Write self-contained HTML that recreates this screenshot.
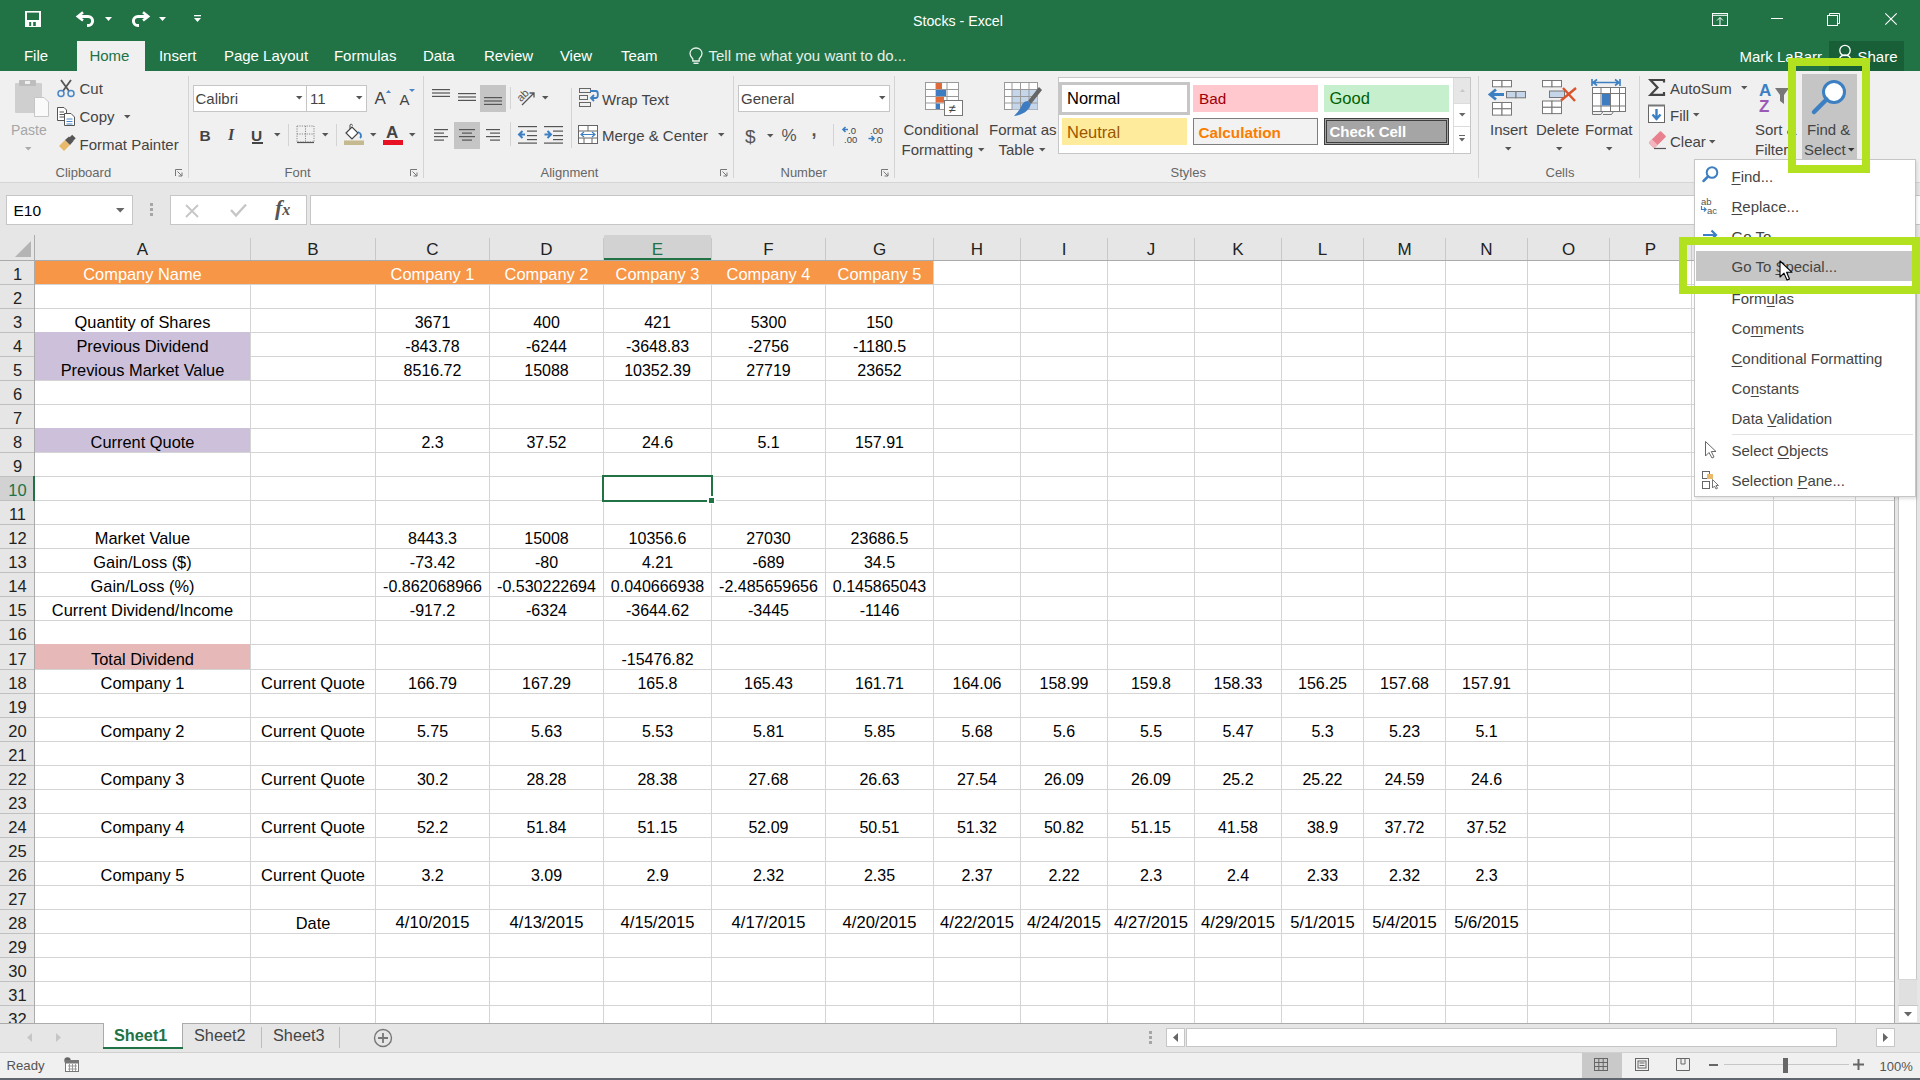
<!DOCTYPE html><html><head><meta charset="utf-8"><title>Stocks - Excel</title><style>
*{margin:0;padding:0;box-sizing:border-box}
html,body{width:1920px;height:1080px;overflow:hidden;background:#fff;font-family:"Liberation Sans",sans-serif}
.a{position:absolute}
.t{position:absolute;white-space:nowrap;line-height:1}
svg{position:absolute;overflow:visible}
</style></head><body>
<div class="a" style="left:0px;top:0px;width:1920px;height:71px;background:#217346;"></div>
<svg style="left:25px;top:11px" width="16" height="16" viewBox="0 0 16 16"><rect x="0" y="0" width="16" height="16" fill="#fff"/><rect x="2" y="1.6" width="12" height="7.4" fill="#217346"/><rect x="4.2" y="11" width="2" height="4" fill="#217346"/><rect x="8.2" y="11" width="2.6" height="4" fill="#217346"/></svg>
<svg style="left:76px;top:11px" width="22" height="18" viewBox="0 0 22 18"><path d="M7 1.2 L1.8 5.4 L7 9.6" stroke="#fff" stroke-width="2.6" fill="none"/><path d="M2.5 5.4 H12 A4.6 4.6 0 0 1 12 14.6 H11" stroke="#fff" stroke-width="3" fill="none"/></svg>
<svg style="left:105px;top:17px" width="8" height="4" viewBox="0 0 8 4"><path d="M0 0 H7 L3.5 4 Z" fill="#fff"/></svg>
<svg style="left:128px;top:11px" width="22" height="18" viewBox="0 0 22 18"><g transform="translate(22,0) scale(-1,1)"><path d="M7 1.2 L1.8 5.4 L7 9.6" stroke="#fff" stroke-width="2.6" fill="none"/><path d="M2.5 5.4 H12 A4.6 4.6 0 0 1 12 14.6 H11" stroke="#fff" stroke-width="3" fill="none"/></g></svg>
<svg style="left:159px;top:17px" width="8" height="4" viewBox="0 0 8 4"><path d="M0 0 H7 L3.5 4 Z" fill="#fff"/></svg>
<svg style="left:194px;top:15px" width="7" height="8" viewBox="0 0 7 8"><rect x="0" y="0" width="7" height="1.3" fill="#fff"/><path d="M0 3 H7 L3.5 7 Z" fill="#fff"/></svg>
<span class="t" style="left:913.0px;top:14.2px;font-size:14.2px;color:#fff;font-weight:normal;">Stocks - Excel</span>
<svg style="left:1712px;top:13px" width="16" height="13" viewBox="0 0 16 13"><rect x="0.5" y="0.5" width="15" height="12" fill="none" stroke="#fff"/><path d="M8 4.5 V12 M5 7.5 L8 4.5 L11 7.5" stroke="#fff" fill="none"/><path d="M0.5 2.3 H15.5" stroke="#fff"/></svg>
<div class="a" style="left:1771px;top:18px;width:12px;height:1px;background:#fff;"></div>
<svg style="left:1827px;top:13px" width="13" height="13" viewBox="0 0 13 13"><rect x="0.5" y="2.5" width="10" height="10" fill="none" stroke="#fff"/><path d="M2.5 2.5 V0.5 H12.5 V10.5 H10.5" fill="none" stroke="#fff"/></svg>
<svg style="left:1885px;top:13px" width="12" height="12" viewBox="0 0 12 12"><path d="M0.3 0.3 L11.7 11.7 M11.7 0.3 L0.3 11.7" stroke="#fff" stroke-width="1.1"/></svg>
<div class="a" style="left:77px;top:41px;width:68px;height:30px;background:#f0f0f0;"></div>
<span class="t" style="left:23.9px;top:48.0px;font-size:15px;color:#fff;font-weight:normal;">File</span>
<span class="t" style="left:89.4px;top:48.0px;font-size:15px;color:#217346;font-weight:normal;">Home</span>
<span class="t" style="left:158.9px;top:48.0px;font-size:15px;color:#fff;font-weight:normal;">Insert</span>
<span class="t" style="left:223.9px;top:48.0px;font-size:15px;color:#fff;font-weight:normal;">Page Layout</span>
<span class="t" style="left:333.9px;top:48.0px;font-size:15px;color:#fff;font-weight:normal;">Formulas</span>
<span class="t" style="left:422.9px;top:48.0px;font-size:15px;color:#fff;font-weight:normal;">Data</span>
<span class="t" style="left:483.9px;top:48.0px;font-size:15px;color:#fff;font-weight:normal;">Review</span>
<span class="t" style="left:559.9px;top:48.0px;font-size:15px;color:#fff;font-weight:normal;">View</span>
<span class="t" style="left:620.9px;top:48.0px;font-size:15px;color:#fff;font-weight:normal;">Team</span>
<svg style="left:689px;top:47px" width="14" height="18" viewBox="0 0 14 18"><path d="M7 1 C3.5 1 1 3.5 1 6.5 C1 9 2.6 10.3 3.8 11.8 V14 H10.2 V11.8 C11.4 10.3 13 9 13 6.5 C13 3.5 10.5 1 7 1 Z" fill="none" stroke="#e8f0ea" stroke-width="1.3"/><path d="M4.5 16.3 H9.5" stroke="#e8f0ea" stroke-width="1.4"/></svg>
<span class="t" style="left:708.5px;top:48.0px;font-size:15px;color:#e4efe7;font-weight:normal;">Tell me what you want to do...</span>
<span class="t" style="left:1739.5px;top:48.8px;font-size:15px;color:#fff;font-weight:normal;">Mark LaBarr</span>
<div class="a" style="left:1829px;top:41px;width:75px;height:30px;background:#185f37;"></div>
<svg style="left:1838px;top:45px" width="14" height="18" viewBox="0 0 14 18"><circle cx="7" cy="5.5" r="5.2" fill="none" stroke="#fff" stroke-width="1.3"/><path d="M1 17 C1 12 3.5 10 7 10 C10.5 10 13 12 13 17" fill="none" stroke="#fff" stroke-width="1.3"/></svg>
<span class="t" style="left:1857.5px;top:48.8px;font-size:15px;color:#fff;font-weight:normal;">Share</span>
<div class="a" style="left:0px;top:71px;width:1920px;height:111px;background:#f0f0f0;"></div>
<div class="a" style="left:0px;top:182px;width:1920px;height:1px;background:#d5d5d5;"></div>
<div class="a" style="left:188px;top:76px;width:1px;height:102px;background:#d4d4d4;"></div>
<div class="a" style="left:423px;top:76px;width:1px;height:102px;background:#d4d4d4;"></div>
<div class="a" style="left:733px;top:76px;width:1px;height:102px;background:#d4d4d4;"></div>
<div class="a" style="left:894px;top:76px;width:1px;height:102px;background:#d4d4d4;"></div>
<div class="a" style="left:1478px;top:76px;width:1px;height:102px;background:#d4d4d4;"></div>
<div class="a" style="left:1639px;top:76px;width:1px;height:102px;background:#d4d4d4;"></div>
<svg style="left:14px;top:79px" width="36" height="39" viewBox="0 0 36 39"><rect x="1" y="4" width="27" height="30" rx="1" fill="#cfcfcf"/><rect x="5" y="1" width="17" height="6" rx="1" fill="#bdbdbd"/><rect x="11" y="2" width="5" height="3" fill="#f0f0f0"/><path d="M20.5 18.5 H30 L34.5 23 V37.5 H20.5 Z" fill="#fafafa" stroke="#c6c6c6"/></svg>
<span class="t" style="left:11.0px;top:122.6px;font-size:14px;color:#a6a6a6;font-weight:normal;">Paste</span>
<svg style="left:25px;top:147px" width="7" height="4" viewBox="0 0 7 4"><path d="M0 0 H6.5 L3.25 3.5 Z" fill="#aaa"/></svg>
<svg style="left:57px;top:79px" width="18" height="18" viewBox="0 0 18 18"><path d="M4 1 L12 12 M14 1 L6 12" stroke="#555" stroke-width="1.8"/><circle cx="4" cy="14.5" r="3" fill="none" stroke="#4a86c5" stroke-width="1.5"/><circle cx="14" cy="14.5" r="3" fill="none" stroke="#4a86c5" stroke-width="1.5"/></svg>
<span class="t" style="left:79.5px;top:81.0px;font-size:15px;color:#444;font-weight:normal;">Cut</span>
<svg style="left:57px;top:107px" width="19" height="19" viewBox="0 0 19 19"><path d="M0.5 0.5 H7 L9.5 3 V13.5 H0.5 Z" fill="#fff" stroke="#555"/><path d="M2.5 5 H7 M2.5 7.5 H7 M2.5 10 H7" stroke="#555"/><path d="M7.5 6.5 H14 L17.5 10 V18.5 H7.5 Z" fill="#fff" stroke="#555"/><path d="M9.5 12 H15.5 M9.5 14.5 H15.5 M9.5 17 H15.5" stroke="#4a86c5"/></svg>
<span class="t" style="left:79.5px;top:109.0px;font-size:15px;color:#444;font-weight:normal;">Copy</span>
<svg style="left:124px;top:114.5px" width="7" height="4" viewBox="0 0 7 4"><path d="M0 0 H6.5 L3.25 3.5 Z" fill="#555"/></svg>
<svg style="left:58px;top:136px" width="18" height="16" viewBox="0 0 18 16"><path d="M1 10 L7 4 L12 9 L6 15 Z" fill="#e8b96a"/><path d="M7 4 L11 0.5 L15.5 5 L12 9 Z" fill="#555"/><rect x="12" y="0" width="5" height="4" transform="rotate(45 14.5 2)" fill="#555"/></svg>
<span class="t" style="left:79.5px;top:136.8px;font-size:15px;color:#444;font-weight:normal;">Format Painter</span>
<span class="t" style="left:55.5px;top:165.9px;font-size:13px;color:#666;font-weight:normal;">Clipboard</span>
<svg style="left:175px;top:169px" width="8" height="8" viewBox="0 0 8 8"><path d="M0.5 7 V0.5 H7" fill="none" stroke="#777"/><path d="M2.5 2.5 L7 7 M3.5 7 H7 V3.5" fill="none" stroke="#777"/></svg>
<div class="a" style="left:193px;top:85px;width:114px;height:27px;background:#fff;border:1px solid #c6c6c6"></div>
<div class="a" style="left:306px;top:85px;width:61px;height:27px;background:#fff;border:1px solid #c6c6c6"></div>
<span class="t" style="left:195.5px;top:91.2px;font-size:15px;color:#444;font-weight:normal;">Calibri</span>
<svg style="left:296px;top:95.5px" width="7" height="4" viewBox="0 0 7 4"><path d="M0 0 H6.5 L3.25 3.5 Z" fill="#555"/></svg>
<span class="t" style="left:310.0px;top:91.2px;font-size:15px;color:#444;font-weight:normal;">11</span>
<svg style="left:356px;top:95.5px" width="7" height="4" viewBox="0 0 7 4"><path d="M0 0 H6.5 L3.25 3.5 Z" fill="#555"/></svg>
<span class="t" style="left:374.5px;top:90.0px;font-size:17px;color:#444;font-weight:normal;">A</span>
<svg style="left:386px;top:90px" width="5" height="3" viewBox="0 0 5 3"><path d="M0 3 L2.5 0 L5 3 Z" fill="#4a86c5"/></svg>
<span class="t" style="left:399.5px;top:91.8px;font-size:15px;color:#444;font-weight:normal;">A</span>
<svg style="left:409px;top:89px" width="6" height="3" viewBox="0 0 6 3"><path d="M0 0 H6 L3 3 Z" fill="#4a86c5"/></svg>
<span class="t" style="left:199.5px;top:127.6px;font-size:15.5px;color:#444;font-weight:bold;">B</span>
<span class="t" style="left:228.0px;top:127.2px;font-size:16px;color:#444;font-weight:bold;font-family:'Liberation Serif',serif"><i>I</i></span>
<span class="t" style="left:251.0px;top:127.6px;font-size:15.5px;color:#444;font-weight:bold;">U</span>
<div class="a" style="left:252px;top:142px;width:11px;height:1.5px;background:#444;"></div>
<svg style="left:273.5px;top:133px" width="7" height="4" viewBox="0 0 7 4"><path d="M0 0 H6.5 L3.25 3.5 Z" fill="#555"/></svg>
<div class="a" style="left:288px;top:124px;width:1px;height:22px;background:#d4d4d4;"></div>
<svg style="left:296px;top:125px" width="19" height="19" viewBox="0 0 19 19"><path d="M1 1 H18 V17 H1 Z M9.5 1 V17 M1 9 H18" fill="none" stroke="#888" stroke-dasharray="1.2 1.2"/><path d="M1 17.5 H18" stroke="#555" stroke-width="1.2"/></svg>
<svg style="left:321.5px;top:133px" width="7" height="4" viewBox="0 0 7 4"><path d="M0 0 H6.5 L3.25 3.5 Z" fill="#555"/></svg>
<div class="a" style="left:336px;top:124px;width:1px;height:22px;background:#d4d4d4;"></div>
<svg style="left:343px;top:124px" width="21" height="22" viewBox="0 0 21 22"><path d="M3 9 L9 3 L15 9 L9 15 Z" fill="#fff" stroke="#444" stroke-width="1.2"/><path d="M7 5 V1 C7 0 9.5 0 9.5 1.5" fill="none" stroke="#444"/><path d="M15 8 C18 9 19 12 17 14" fill="none" stroke="#3c7fc2" stroke-width="1.8"/><rect x="1" y="16.5" width="20" height="4.5" fill="#c5b98f"/></svg>
<svg style="left:370px;top:133px" width="7" height="4" viewBox="0 0 7 4"><path d="M0 0 H6.5 L3.25 3.5 Z" fill="#555"/></svg>
<span class="t" style="left:386.0px;top:124.0px;font-size:17px;color:#444;font-weight:bold;">A</span>
<div class="a" style="left:383px;top:140px;width:20px;height:5px;background:#e81123;"></div>
<svg style="left:408.5px;top:133px" width="7" height="4" viewBox="0 0 7 4"><path d="M0 0 H6.5 L3.25 3.5 Z" fill="#555"/></svg>
<span class="t" style="left:284.5px;top:165.9px;font-size:13px;color:#666;font-weight:normal;">Font</span>
<svg style="left:410px;top:169px" width="8" height="8" viewBox="0 0 8 8"><path d="M0.5 7 V0.5 H7" fill="none" stroke="#777"/><path d="M2.5 2.5 L7 7 M3.5 7 H7 V3.5" fill="none" stroke="#777"/></svg>
<svg style="left:432px;top:88.5px" width="20" height="20" viewBox="0 0 20 20"><rect x="0" y="0.0" width="18" height="1.2" fill="#555"/><rect x="0" y="3.4" width="18" height="1.2" fill="#555"/><rect x="0" y="6.8" width="18" height="1.2" fill="#555"/></svg>
<svg style="left:458px;top:92.5px" width="20" height="20" viewBox="0 0 20 20"><rect x="0" y="0.0" width="18" height="1.2" fill="#555"/><rect x="0" y="3.4" width="18" height="1.2" fill="#555"/><rect x="0" y="6.8" width="18" height="1.2" fill="#555"/></svg>
<div class="a" style="left:480px;top:85px;width:26px;height:27px;background:#c5c5c5;"></div>
<svg style="left:484px;top:97px" width="20" height="20" viewBox="0 0 20 20"><rect x="0" y="0.0" width="18" height="1.2" fill="#555"/><rect x="0" y="3.4" width="18" height="1.2" fill="#555"/><rect x="0" y="6.8" width="18" height="1.2" fill="#555"/></svg>
<div class="a" style="left:510px;top:87px;width:1px;height:22px;background:#d4d4d4;"></div>
<svg style="left:517px;top:88px" width="22" height="19" viewBox="0 0 22 19"><text x="0" y="11" font-size="11" fill="#555" transform="rotate(-45 6 8)" font-family="Liberation Sans">ab</text><path d="M5 17 L17 5 M12.5 5 H17 V9.5" fill="none" stroke="#555" stroke-width="1.3"/></svg>
<svg style="left:542px;top:96px" width="7" height="4" viewBox="0 0 7 4"><path d="M0 0 H6.5 L3.25 3.5 Z" fill="#555"/></svg>
<div class="a" style="left:571px;top:88px;width:1px;height:60px;background:#d4d4d4;"></div>
<svg style="left:579px;top:88px" width="21" height="20" viewBox="0 0 21 20"><rect x="0.5" y="0.5" width="11" height="4" fill="none" stroke="#666"/><rect x="0.5" y="7.5" width="8" height="4" fill="none" stroke="#666"/><rect x="0.5" y="14.5" width="11" height="4" fill="none" stroke="#666"/><path d="M11 3 H17 C19.5 3 19.5 10 17 10 H13" fill="none" stroke="#3c7fc2" stroke-width="1.8"/><path d="M15 7 L12 10 L15 13" fill="none" stroke="#3c7fc2" stroke-width="1.8"/></svg>
<span class="t" style="left:602.0px;top:91.8px;font-size:15px;color:#444;font-weight:normal;">Wrap Text</span>
<svg style="left:434px;top:129px" width="20" height="20" viewBox="0 0 20 20"><rect x="0" y="0.0" width="14" height="1.2" fill="#555"/><rect x="0" y="3.5" width="10" height="1.2" fill="#555"/><rect x="0" y="7.0" width="14" height="1.2" fill="#555"/><rect x="0" y="10.5" width="10" height="1.2" fill="#555"/></svg>
<div class="a" style="left:454px;top:122px;width:26px;height:27px;background:#c5c5c5;"></div>
<svg style="left:459px;top:129px" width="20" height="20" viewBox="0 0 20 20"><rect x="0" y="0.0" width="16" height="1.2" fill="#555"/><rect x="3" y="3.5" width="10" height="1.2" fill="#555"/><rect x="0" y="7.0" width="16" height="1.2" fill="#555"/><rect x="3" y="10.5" width="10" height="1.2" fill="#555"/></svg>
<svg style="left:486px;top:129px" width="20" height="20" viewBox="0 0 20 20"><rect x="0" y="0.0" width="14" height="1.2" fill="#555"/><rect x="4" y="3.5" width="10" height="1.2" fill="#555"/><rect x="0" y="7.0" width="14" height="1.2" fill="#555"/><rect x="4" y="10.5" width="10" height="1.2" fill="#555"/></svg>
<div class="a" style="left:510px;top:122px;width:1px;height:24px;background:#d4d4d4;"></div>
<svg style="left:518px;top:126px" width="20" height="18" viewBox="0 0 20 18"><rect x="0" y="0" width="19" height="1.2" fill="#555"/><rect x="9" y="4.5" width="10" height="1.2" fill="#555"/><rect x="9" y="9" width="10" height="1.2" fill="#555"/><rect x="9" y="13" width="10" height="1.2" fill="#555"/><rect x="0" y="16.5" width="19" height="1.2" fill="#555"/><path d="M7 8.5 H1.5 M4.5 5 L1 8.5 L4.5 12" fill="none" stroke="#3c7fc2" stroke-width="2"/></svg>
<svg style="left:544px;top:126px" width="20" height="18" viewBox="0 0 20 18"><rect x="0" y="0" width="19" height="1.2" fill="#555"/><rect x="9" y="4.5" width="10" height="1.2" fill="#555"/><rect x="9" y="9" width="10" height="1.2" fill="#555"/><rect x="9" y="13" width="10" height="1.2" fill="#555"/><rect x="0" y="16.5" width="19" height="1.2" fill="#555"/><path d="M0.5 8.5 H6.5 M3.5 5 L7 8.5 L3.5 12" fill="none" stroke="#3c7fc2" stroke-width="2"/></svg>
<svg style="left:578px;top:125px" width="21" height="19" viewBox="0 0 21 19"><rect x="0.5" y="0.5" width="19" height="18" fill="#fff" stroke="#666"/><path d="M0.5 6 H19.5 M0.5 13 H19.5 M10 0.5 V6 M6 13 V18.5 M14 13 V18.5" stroke="#666"/><path d="M3 9.5 H17 M6 7 L3 9.5 L6 12 M14 7 L17 9.5 L14 12" fill="none" stroke="#3c7fc2" stroke-width="1.2"/></svg>
<span class="t" style="left:602.0px;top:127.8px;font-size:15px;color:#444;font-weight:normal;">Merge &amp; Center</span>
<svg style="left:718px;top:133px" width="7" height="4" viewBox="0 0 7 4"><path d="M0 0 H6.5 L3.25 3.5 Z" fill="#555"/></svg>
<span class="t" style="left:540.5px;top:165.9px;font-size:13px;color:#666;font-weight:normal;">Alignment</span>
<svg style="left:720px;top:169px" width="8" height="8" viewBox="0 0 8 8"><path d="M0.5 7 V0.5 H7" fill="none" stroke="#777"/><path d="M2.5 2.5 L7 7 M3.5 7 H7 V3.5" fill="none" stroke="#777"/></svg>
<div class="a" style="left:738px;top:85px;width:152px;height:27px;background:#fff;border:1px solid #c6c6c6"></div>
<span class="t" style="left:741.0px;top:91.2px;font-size:15px;color:#444;font-weight:normal;">General</span>
<svg style="left:878.5px;top:96px" width="7" height="4" viewBox="0 0 7 4"><path d="M0 0 H6.5 L3.25 3.5 Z" fill="#555"/></svg>
<span class="t" style="left:745.0px;top:126.8px;font-size:19px;color:#555;font-weight:normal;">$</span>
<svg style="left:767px;top:133.5px" width="7" height="4" viewBox="0 0 7 4"><path d="M0 0 H6.5 L3.25 3.5 Z" fill="#555"/></svg>
<span class="t" style="left:781.5px;top:127.0px;font-size:17px;color:#555;font-weight:normal;">%</span>
<span class="t" style="left:811.5px;top:120.7px;font-size:18px;color:#555;font-weight:bold;">,</span>
<div class="a" style="left:833px;top:124px;width:1px;height:22px;background:#d4d4d4;"></div>
<svg style="left:842px;top:126px" width="18" height="18" viewBox="0 0 18 18"><text x="6" y="8" font-size="9.5" fill="#444" font-family="Liberation Sans">.0</text><text x="2" y="17" font-size="9.5" fill="#444" font-family="Liberation Sans">.00</text><path d="M6 3.5 H1 M3.5 1 L1 3.5 L3.5 6" fill="none" stroke="#3c7fc2" stroke-width="1.6"/></svg>
<svg style="left:868px;top:126px" width="18" height="18" viewBox="0 0 18 18"><text x="2" y="8" font-size="9.5" fill="#444" font-family="Liberation Sans">.00</text><text x="6" y="17" font-size="9.5" fill="#444" font-family="Liberation Sans">.0</text><path d="M0.5 12.5 H6 M3.5 10 L6 12.5 L3.5 15" fill="none" stroke="#3c7fc2" stroke-width="1.6"/></svg>
<span class="t" style="left:780.5px;top:165.9px;font-size:13px;color:#666;font-weight:normal;">Number</span>
<svg style="left:881px;top:169px" width="8" height="8" viewBox="0 0 8 8"><path d="M0.5 7 V0.5 H7" fill="none" stroke="#777"/><path d="M2.5 2.5 L7 7 M3.5 7 H7 V3.5" fill="none" stroke="#777"/></svg>
<svg style="left:925px;top:82px" width="38" height="35" viewBox="0 0 38 35"><g fill="#fff" stroke="#999"><rect x="0.5" y="0.5" width="33" height="27"/></g><path d="M0.5 7.5 H33.5 M0.5 14.5 H33.5 M0.5 21 H33.5 M11 0.5 V27.5 M22 0.5 V27.5" stroke="#999"/><rect x="11" y="1" width="6" height="6" fill="#e06a3a"/><rect x="11" y="8" width="10" height="6" fill="#3e7cc2"/><rect x="11" y="15" width="8" height="5.5" fill="#e06a3a"/><rect x="11" y="21.5" width="4" height="5.5" fill="#3e7cc2"/><rect x="19.5" y="18.5" width="18" height="15" fill="#fff" stroke="#777"/><text x="23.5" y="31" font-size="13" fill="#444" font-family="Liberation Sans">&#8800;</text></svg>
<span class="t" style="left:903.5px;top:122.2px;font-size:15px;color:#444;font-weight:normal;">Conditional</span>
<span class="t" style="left:901.5px;top:142.2px;font-size:15px;color:#444;font-weight:normal;">Formatting</span>
<svg style="left:977.5px;top:147.5px" width="7" height="4" viewBox="0 0 7 4"><path d="M0 0 H6.5 L3.25 3.5 Z" fill="#555"/></svg>
<svg style="left:1004px;top:82px" width="40" height="35" viewBox="0 0 40 35"><rect x="0.5" y="0.5" width="33" height="27" fill="#fff" stroke="#999"/><rect x="8" y="7.5" width="25.5" height="20" fill="#c5d6ea"/><path d="M0.5 7.5 H33.5 M0.5 14.5 H33.5 M0.5 21 H33.5 M8 0.5 V27.5 M16.5 0.5 V27.5 M25 0.5 V27.5" stroke="#999"/><path d="M38 8 L27 22 L24 19 L35 5 Z" fill="#666"/><path d="M24 19 C20 19 18 22 17 25 C15 29 11 33 10 34 C16 33 24 31 27 22 Z" fill="#3e7cc2"/></svg>
<span class="t" style="left:989.0px;top:122.2px;font-size:15px;color:#444;font-weight:normal;">Format as</span>
<span class="t" style="left:998.5px;top:142.2px;font-size:15px;color:#444;font-weight:normal;">Table</span>
<svg style="left:1038.5px;top:147.5px" width="7" height="4" viewBox="0 0 7 4"><path d="M0 0 H6.5 L3.25 3.5 Z" fill="#555"/></svg>
<div class="a" style="left:1058px;top:77px;width:413px;height:77px;background:#fff;border:1px solid #c6c6c6"></div>
<div class="a" style="left:1454px;top:78px;width:16px;height:75px;background:#fff;"></div>
<div class="a" style="left:1454px;top:78px;width:16px;height:25px;background:#e6e6e6;"></div>
<div class="a" style="left:1453px;top:78px;width:1px;height:75px;background:#dcdcdc;"></div>
<div class="a" style="left:1454px;top:103px;width:16px;height:1px;background:#dcdcdc;"></div>
<div class="a" style="left:1454px;top:126px;width:16px;height:1px;background:#dcdcdc;"></div>
<svg style="left:1460px;top:89px" width="5" height="3" viewBox="0 0 5 3"><path d="M0 3 L2.5 0 L5 3 Z" fill="#c6c6c6"/></svg>
<svg style="left:1459px;top:113px" width="7" height="4" viewBox="0 0 7 4"><path d="M0 0 H6.5 L3.25 3.5 Z" fill="#666"/></svg>
<svg style="left:1459px;top:135px" width="6" height="7" viewBox="0 0 6 7"><rect x="0" y="0" width="6" height="1" fill="#666"/><path d="M0 3 H6 L3 6.5 Z" fill="#666"/></svg>
<div class="a" style="left:1059px;top:82px;width:131px;height:33px;background:#fff;border:3px solid #c6c6c6"></div>
<span class="t" style="left:1067.0px;top:90.0px;font-size:16.5px;color:#000;font-weight:normal;">Normal</span>
<div class="a" style="left:1193px;top:85px;width:125px;height:27px;background:#ffc7ce;"></div>
<span class="t" style="left:1199.0px;top:91.0px;font-size:15.3px;color:#9c0006;font-weight:normal;">Bad</span>
<div class="a" style="left:1324px;top:85px;width:125px;height:27px;background:#c6efce;"></div>
<span class="t" style="left:1329.5px;top:90.0px;font-size:16.5px;color:#006100;font-weight:normal;">Good</span>
<div class="a" style="left:1062px;top:118px;width:125px;height:27px;background:#ffeb9c;"></div>
<span class="t" style="left:1067.0px;top:123.5px;font-size:16.5px;color:#9c5700;font-weight:normal;">Neutral</span>
<div class="a" style="left:1193px;top:118px;width:125px;height:27px;background:#f2f2f2;border:1px solid #7f7f7f"></div>
<span class="t" style="left:1198.5px;top:124.5px;font-size:15.3px;color:#fa7d00;font-weight:bold;">Calculation</span>
<div class="a" style="left:1324px;top:118px;width:125px;height:27px;background:#a5a5a5;border:3px double #3f3f3f"></div>
<span class="t" style="left:1329.5px;top:124.4px;font-size:15px;color:#fff;font-weight:bold;">Check Cell</span>
<span class="t" style="left:1170.5px;top:165.9px;font-size:13px;color:#666;font-weight:normal;">Styles</span>
<svg style="left:1488px;top:79px" width="40" height="37" viewBox="0 0 40 37"><rect x="4.5" y="1.5" width="9.5" height="6.3" fill="#fff" stroke="#777"/><rect x="14.0" y="1.5" width="9.5" height="6.3" fill="#fff" stroke="#777"/><rect x="4.5" y="23.5" width="9.5" height="6.3" fill="#fff" stroke="#777"/><rect x="14.0" y="23.5" width="9.5" height="6.3" fill="#fff" stroke="#777"/><rect x="4.5" y="29.8" width="9.5" height="6.3" fill="#fff" stroke="#777"/><rect x="14.0" y="29.8" width="9.5" height="6.3" fill="#fff" stroke="#777"/><rect x="18.5" y="12.5" width="9.5" height="6.3" fill="#c5d6ea" stroke="#777"/><rect x="28" y="12.5" width="9.5" height="6.3" fill="#c5d6ea" stroke="#777"/><path d="M16 15.5 H3 M8 10.5 L2 15.5 L8 20.5" fill="none" stroke="#3c7fc2" stroke-width="2.8"/></svg>
<span class="t" style="left:1490.0px;top:121.8px;font-size:15px;color:#444;font-weight:normal;">Insert</span>
<svg style="left:1505px;top:146.5px" width="7" height="4" viewBox="0 0 7 4"><path d="M0 0 H6.5 L3.25 3.5 Z" fill="#555"/></svg>
<svg style="left:1541px;top:79px" width="40" height="37" viewBox="0 0 40 37"><rect x="1.5" y="1.5" width="9.5" height="6.3" fill="#fff" stroke="#777"/><rect x="11.0" y="1.5" width="9.5" height="6.3" fill="#fff" stroke="#777"/><rect x="1.5" y="22.0" width="9.5" height="6.3" fill="#fff" stroke="#777"/><rect x="11.0" y="22.0" width="9.5" height="6.3" fill="#fff" stroke="#777"/><rect x="1.5" y="28.3" width="9.5" height="6.3" fill="#fff" stroke="#777"/><rect x="11.0" y="28.3" width="9.5" height="6.3" fill="#fff" stroke="#777"/><rect x="8.5" y="12" width="15" height="6.5" fill="#c5d6ea" stroke="#777"/><path d="M20 21.5 L35 9 M22 9 L34 22" stroke="#d9542b" stroke-width="2.4" fill="none"/></svg>
<span class="t" style="left:1536.0px;top:121.8px;font-size:15px;color:#444;font-weight:normal;">Delete</span>
<svg style="left:1556px;top:146.5px" width="7" height="4" viewBox="0 0 7 4"><path d="M0 0 H6.5 L3.25 3.5 Z" fill="#555"/></svg>
<svg style="left:1591px;top:78px" width="38" height="40" viewBox="0 0 38 40"><path d="M2 4.5 H28 M1 1 V8 M29 1 V8 M6 1.5 L2 4.5 L6 7.5 M24 1.5 L28 4.5 L24 7.5" fill="none" stroke="#3c7fc2" stroke-width="1.6"/><rect x="1.5" y="9.5" width="33" height="24" fill="#fff" stroke="#777"/><path d="M1.5 15.5 H34.5 M1.5 28 H34.5 M10 9.5 V33.5 M19.5 9.5 V33.5 M28.5 9.5 V33.5" stroke="#777"/><rect x="11" y="16" width="8" height="11.5" fill="#3e7cc2"/><path d="M1.5 33.5 V36.5 H10 L12 33.5 M12 36.5 H20.5 L22.5 33.5" fill="none" stroke="#777"/></svg>
<span class="t" style="left:1585.0px;top:121.8px;font-size:15px;color:#444;font-weight:normal;">Format</span>
<svg style="left:1606px;top:146.5px" width="7" height="4" viewBox="0 0 7 4"><path d="M0 0 H6.5 L3.25 3.5 Z" fill="#555"/></svg>
<span class="t" style="left:1545.5px;top:165.9px;font-size:13px;color:#666;font-weight:normal;">Cells</span>
<svg style="left:1649px;top:79px" width="16" height="17" viewBox="0 0 16 17"><path d="M15 3.5 V1 H1.5 L8.5 8.5 L1.5 15.8 H15 V13" fill="none" stroke="#444" stroke-width="2.2"/></svg>
<span class="t" style="left:1670.0px;top:80.8px;font-size:15px;color:#444;font-weight:normal;">AutoSum</span>
<svg style="left:1740.5px;top:86px" width="7" height="4" viewBox="0 0 7 4"><path d="M0 0 H6.5 L3.25 3.5 Z" fill="#555"/></svg>
<svg style="left:1648px;top:104px" width="18" height="20" viewBox="0 0 18 20"><rect x="0.5" y="1.5" width="16" height="17" fill="#fff" stroke="#666"/><rect x="0" y="0.5" width="17" height="2" fill="#777"/><path d="M8.5 5 V15 M4.5 10.5 L8.5 15 L12.5 10.5" fill="none" stroke="#3c7fc2" stroke-width="2.4"/></svg>
<span class="t" style="left:1670.0px;top:107.8px;font-size:15px;color:#444;font-weight:normal;">Fill</span>
<svg style="left:1693px;top:113px" width="7" height="4" viewBox="0 0 7 4"><path d="M0 0 H6.5 L3.25 3.5 Z" fill="#555"/></svg>
<svg style="left:1648px;top:131px" width="20" height="20" viewBox="0 0 20 20"><g transform="rotate(-45 9 9)"><rect x="1" y="5" width="17" height="8" rx="1" fill="#e8808e"/><rect x="1" y="5" width="5" height="8" rx="1" fill="#f3b5bd"/></g><path d="M6 17.5 H18" stroke="#555" stroke-width="1.2"/></svg>
<span class="t" style="left:1670.0px;top:134.2px;font-size:15px;color:#444;font-weight:normal;">Clear</span>
<svg style="left:1708.5px;top:140px" width="7" height="4" viewBox="0 0 7 4"><path d="M0 0 H6.5 L3.25 3.5 Z" fill="#555"/></svg>
<span class="t" style="left:1759.0px;top:81.5px;font-size:17px;color:#3c7fc2;font-weight:bold;">A</span>
<span class="t" style="left:1759.0px;top:97.5px;font-size:17px;color:#9b59b6;font-weight:bold;">Z</span>
<svg style="left:1775px;top:88px" width="15" height="22" viewBox="0 0 15 22"><path d="M0 0 H14 L9 7 V16 L5 13 V7 Z" fill="#777"/></svg>
<span class="t" style="left:1755.0px;top:121.8px;font-size:15px;color:#444;font-weight:normal;">Sort &amp;</span>
<span class="t" style="left:1755.0px;top:142.2px;font-size:15px;color:#444;font-weight:normal;">Filter</span>
<div class="a" style="left:1802px;top:74px;width:55px;height:86px;background:#c5c5c5;"></div>
<svg style="left:1811px;top:79px" width="36" height="36" viewBox="0 0 36 36"><circle cx="23" cy="13" r="10.5" fill="#fff" stroke="#3c7fc2" stroke-width="3"/><path d="M15.5 20.5 L3 33" stroke="#3c7fc2" stroke-width="4.5" stroke-linecap="round"/></svg>
<span class="t" style="left:1807.0px;top:121.8px;font-size:15px;color:#444;font-weight:normal;">Find &amp;</span>
<span class="t" style="left:1804.0px;top:142.2px;font-size:15px;color:#444;font-weight:normal;">Select</span>
<svg style="left:1847.5px;top:147.5px" width="7" height="4" viewBox="0 0 7 4"><path d="M0 0 H6.5 L3.25 3.5 Z" fill="#333"/></svg>
<div class="a" style="left:0px;top:183px;width:1920px;height:52px;background:#e6e6e6;"></div>
<div class="a" style="left:6px;top:195px;width:127px;height:30px;background:#fff;border:1px solid #c6c6c6"></div>
<span class="t" style="left:13.5px;top:202.8px;font-size:15.5px;color:#000;font-weight:normal;">E10</span>
<svg style="left:116px;top:208px" width="9" height="5" viewBox="0 0 9 5"><path d="M0 0 H8.5 L4.25 4.5 Z" fill="#666"/></svg>
<div class="a" style="left:150px;top:203px;width:3px;height:3px;background:#a6a6a6;"></div>
<div class="a" style="left:150px;top:208px;width:3px;height:3px;background:#a6a6a6;"></div>
<div class="a" style="left:150px;top:213px;width:3px;height:3px;background:#a6a6a6;"></div>
<div class="a" style="left:170px;top:195px;width:137px;height:30px;background:#fff;border:1px solid #c6c6c6"></div>
<svg style="left:185px;top:204px" width="14" height="14" viewBox="0 0 14 14"><path d="M1 1 L13 13 M13 1 L1 13" stroke="#c6c6c6" stroke-width="1.8"/></svg>
<svg style="left:230px;top:203px" width="17" height="14" viewBox="0 0 17 14"><path d="M1 7 L6 12.5 L16 1.5" fill="none" stroke="#c6c6c6" stroke-width="2.4"/></svg>
<span class="t" style="left:275.0px;top:197.3px;font-size:22px;color:#555;font-weight:normal;font-family:'Liberation Serif',serif;font-weight:bold"><i>f</i><i style="font-size:16px">x</i></span>
<div class="a" style="left:310px;top:195px;width:1610px;height:30px;background:#fff;border:1px solid #c6c6c6;border-right:none"></div>
<div class="a" style="left:0px;top:235px;width:1894px;height:25px;background:#e6e6e6;"></div>
<div class="a" style="left:0px;top:261px;width:34px;height:762px;background:#e6e6e6;"></div>
<div class="a" style="left:35px;top:261px;width:1859px;height:762px;background:#fff;"></div>
<svg style="left:14px;top:241px" width="18" height="17" viewBox="0 0 18 17"><path d="M17 0 L17 16 L1 16 Z" fill="#b4b4b4"/></svg>
<div class="a" style="left:604px;top:235px;width:107px;height:25px;background:#d2d2d2;"></div>
<div class="a" style="left:604px;top:258px;width:107px;height:2px;background:#217346;"></div>
<div class="a" style="left:0px;top:477px;width:34px;height:23px;background:#d2d2d2;"></div>
<div class="a" style="left:0px;top:260px;width:1894px;height:1px;background:#ababab;"></div>
<div class="a" style="left:34px;top:235px;width:1px;height:788px;background:#ababab;"></div>
<div class="a" style="left:250px;top:238px;width:1px;height:22px;background:#c8c8c8;"></div>
<div class="a" style="left:375px;top:238px;width:1px;height:22px;background:#c8c8c8;"></div>
<div class="a" style="left:489px;top:238px;width:1px;height:22px;background:#c8c8c8;"></div>
<div class="a" style="left:603px;top:238px;width:1px;height:22px;background:#c8c8c8;"></div>
<div class="a" style="left:711px;top:238px;width:1px;height:22px;background:#c8c8c8;"></div>
<div class="a" style="left:825px;top:238px;width:1px;height:22px;background:#c8c8c8;"></div>
<div class="a" style="left:933px;top:238px;width:1px;height:22px;background:#c8c8c8;"></div>
<div class="a" style="left:1020px;top:238px;width:1px;height:22px;background:#c8c8c8;"></div>
<div class="a" style="left:1107px;top:238px;width:1px;height:22px;background:#c8c8c8;"></div>
<div class="a" style="left:1194px;top:238px;width:1px;height:22px;background:#c8c8c8;"></div>
<div class="a" style="left:1281px;top:238px;width:1px;height:22px;background:#c8c8c8;"></div>
<div class="a" style="left:1363px;top:238px;width:1px;height:22px;background:#c8c8c8;"></div>
<div class="a" style="left:1445px;top:238px;width:1px;height:22px;background:#c8c8c8;"></div>
<div class="a" style="left:1527px;top:238px;width:1px;height:22px;background:#c8c8c8;"></div>
<div class="a" style="left:1609px;top:238px;width:1px;height:22px;background:#c8c8c8;"></div>
<div class="a" style="left:1691px;top:238px;width:1px;height:22px;background:#c8c8c8;"></div>
<div class="a" style="left:1773px;top:238px;width:1px;height:22px;background:#c8c8c8;"></div>
<div class="a" style="left:1855px;top:238px;width:1px;height:22px;background:#c8c8c8;"></div>
<div class="a" style="left:250px;top:261px;width:1px;height:762px;background:#d4d4d4;"></div>
<div class="a" style="left:375px;top:261px;width:1px;height:762px;background:#d4d4d4;"></div>
<div class="a" style="left:489px;top:261px;width:1px;height:762px;background:#d4d4d4;"></div>
<div class="a" style="left:603px;top:261px;width:1px;height:762px;background:#d4d4d4;"></div>
<div class="a" style="left:711px;top:261px;width:1px;height:762px;background:#d4d4d4;"></div>
<div class="a" style="left:825px;top:261px;width:1px;height:762px;background:#d4d4d4;"></div>
<div class="a" style="left:933px;top:261px;width:1px;height:762px;background:#d4d4d4;"></div>
<div class="a" style="left:1020px;top:261px;width:1px;height:762px;background:#d4d4d4;"></div>
<div class="a" style="left:1107px;top:261px;width:1px;height:762px;background:#d4d4d4;"></div>
<div class="a" style="left:1194px;top:261px;width:1px;height:762px;background:#d4d4d4;"></div>
<div class="a" style="left:1281px;top:261px;width:1px;height:762px;background:#d4d4d4;"></div>
<div class="a" style="left:1363px;top:261px;width:1px;height:762px;background:#d4d4d4;"></div>
<div class="a" style="left:1445px;top:261px;width:1px;height:762px;background:#d4d4d4;"></div>
<div class="a" style="left:1527px;top:261px;width:1px;height:762px;background:#d4d4d4;"></div>
<div class="a" style="left:1609px;top:261px;width:1px;height:762px;background:#d4d4d4;"></div>
<div class="a" style="left:1691px;top:261px;width:1px;height:762px;background:#d4d4d4;"></div>
<div class="a" style="left:1773px;top:261px;width:1px;height:762px;background:#d4d4d4;"></div>
<div class="a" style="left:1855px;top:261px;width:1px;height:762px;background:#d4d4d4;"></div>
<div class="a" style="left:35px;top:284px;width:1859px;height:1px;background:#d4d4d4;"></div>
<div class="a" style="left:0px;top:284px;width:34px;height:1px;background:#c0c0c0;"></div>
<div class="a" style="left:35px;top:308px;width:1859px;height:1px;background:#d4d4d4;"></div>
<div class="a" style="left:0px;top:308px;width:34px;height:1px;background:#c0c0c0;"></div>
<div class="a" style="left:35px;top:332px;width:1859px;height:1px;background:#d4d4d4;"></div>
<div class="a" style="left:0px;top:332px;width:34px;height:1px;background:#c0c0c0;"></div>
<div class="a" style="left:35px;top:356px;width:1859px;height:1px;background:#d4d4d4;"></div>
<div class="a" style="left:0px;top:356px;width:34px;height:1px;background:#c0c0c0;"></div>
<div class="a" style="left:35px;top:380px;width:1859px;height:1px;background:#d4d4d4;"></div>
<div class="a" style="left:0px;top:380px;width:34px;height:1px;background:#c0c0c0;"></div>
<div class="a" style="left:35px;top:404px;width:1859px;height:1px;background:#d4d4d4;"></div>
<div class="a" style="left:0px;top:404px;width:34px;height:1px;background:#c0c0c0;"></div>
<div class="a" style="left:35px;top:428px;width:1859px;height:1px;background:#d4d4d4;"></div>
<div class="a" style="left:0px;top:428px;width:34px;height:1px;background:#c0c0c0;"></div>
<div class="a" style="left:35px;top:452px;width:1859px;height:1px;background:#d4d4d4;"></div>
<div class="a" style="left:0px;top:452px;width:34px;height:1px;background:#c0c0c0;"></div>
<div class="a" style="left:35px;top:476px;width:1859px;height:1px;background:#d4d4d4;"></div>
<div class="a" style="left:0px;top:476px;width:34px;height:1px;background:#c0c0c0;"></div>
<div class="a" style="left:35px;top:500px;width:1859px;height:1px;background:#d4d4d4;"></div>
<div class="a" style="left:0px;top:500px;width:34px;height:1px;background:#c0c0c0;"></div>
<div class="a" style="left:35px;top:524px;width:1859px;height:1px;background:#d4d4d4;"></div>
<div class="a" style="left:0px;top:524px;width:34px;height:1px;background:#c0c0c0;"></div>
<div class="a" style="left:35px;top:548px;width:1859px;height:1px;background:#d4d4d4;"></div>
<div class="a" style="left:0px;top:548px;width:34px;height:1px;background:#c0c0c0;"></div>
<div class="a" style="left:35px;top:572px;width:1859px;height:1px;background:#d4d4d4;"></div>
<div class="a" style="left:0px;top:572px;width:34px;height:1px;background:#c0c0c0;"></div>
<div class="a" style="left:35px;top:596px;width:1859px;height:1px;background:#d4d4d4;"></div>
<div class="a" style="left:0px;top:596px;width:34px;height:1px;background:#c0c0c0;"></div>
<div class="a" style="left:35px;top:620px;width:1859px;height:1px;background:#d4d4d4;"></div>
<div class="a" style="left:0px;top:620px;width:34px;height:1px;background:#c0c0c0;"></div>
<div class="a" style="left:35px;top:644px;width:1859px;height:1px;background:#d4d4d4;"></div>
<div class="a" style="left:0px;top:644px;width:34px;height:1px;background:#c0c0c0;"></div>
<div class="a" style="left:35px;top:669px;width:1859px;height:1px;background:#d4d4d4;"></div>
<div class="a" style="left:0px;top:669px;width:34px;height:1px;background:#c0c0c0;"></div>
<div class="a" style="left:35px;top:693px;width:1859px;height:1px;background:#d4d4d4;"></div>
<div class="a" style="left:0px;top:693px;width:34px;height:1px;background:#c0c0c0;"></div>
<div class="a" style="left:35px;top:717px;width:1859px;height:1px;background:#d4d4d4;"></div>
<div class="a" style="left:0px;top:717px;width:34px;height:1px;background:#c0c0c0;"></div>
<div class="a" style="left:35px;top:741px;width:1859px;height:1px;background:#d4d4d4;"></div>
<div class="a" style="left:0px;top:741px;width:34px;height:1px;background:#c0c0c0;"></div>
<div class="a" style="left:35px;top:765px;width:1859px;height:1px;background:#d4d4d4;"></div>
<div class="a" style="left:0px;top:765px;width:34px;height:1px;background:#c0c0c0;"></div>
<div class="a" style="left:35px;top:789px;width:1859px;height:1px;background:#d4d4d4;"></div>
<div class="a" style="left:0px;top:789px;width:34px;height:1px;background:#c0c0c0;"></div>
<div class="a" style="left:35px;top:813px;width:1859px;height:1px;background:#d4d4d4;"></div>
<div class="a" style="left:0px;top:813px;width:34px;height:1px;background:#c0c0c0;"></div>
<div class="a" style="left:35px;top:837px;width:1859px;height:1px;background:#d4d4d4;"></div>
<div class="a" style="left:0px;top:837px;width:34px;height:1px;background:#c0c0c0;"></div>
<div class="a" style="left:35px;top:861px;width:1859px;height:1px;background:#d4d4d4;"></div>
<div class="a" style="left:0px;top:861px;width:34px;height:1px;background:#c0c0c0;"></div>
<div class="a" style="left:35px;top:885px;width:1859px;height:1px;background:#d4d4d4;"></div>
<div class="a" style="left:0px;top:885px;width:34px;height:1px;background:#c0c0c0;"></div>
<div class="a" style="left:35px;top:909px;width:1859px;height:1px;background:#d4d4d4;"></div>
<div class="a" style="left:0px;top:909px;width:34px;height:1px;background:#c0c0c0;"></div>
<div class="a" style="left:35px;top:933px;width:1859px;height:1px;background:#d4d4d4;"></div>
<div class="a" style="left:0px;top:933px;width:34px;height:1px;background:#c0c0c0;"></div>
<div class="a" style="left:35px;top:957px;width:1859px;height:1px;background:#d4d4d4;"></div>
<div class="a" style="left:0px;top:957px;width:34px;height:1px;background:#c0c0c0;"></div>
<div class="a" style="left:35px;top:981px;width:1859px;height:1px;background:#d4d4d4;"></div>
<div class="a" style="left:0px;top:981px;width:34px;height:1px;background:#c0c0c0;"></div>
<div class="a" style="left:35px;top:1005px;width:1859px;height:1px;background:#d4d4d4;"></div>
<div class="a" style="left:0px;top:1005px;width:34px;height:1px;background:#c0c0c0;"></div>
<div class="a" style="left:35px;top:261px;width:898px;height:23px;background:#f79646;"></div>
<div class="a" style="left:35px;top:332px;width:215px;height:48px;background:#ccc0da;"></div>
<div class="a" style="left:35px;top:428px;width:215px;height:24px;background:#ccc0da;"></div>
<div class="a" style="left:35px;top:644px;width:215px;height:25px;background:#e6b8b7;"></div>
<span class="t" style="left:92.5px;top:241.1px;width:100px;text-align:center;font-size:17px;color:#222;font-weight:normal;">A</span>
<span class="t" style="left:263.0px;top:241.1px;width:100px;text-align:center;font-size:17px;color:#222;font-weight:normal;">B</span>
<span class="t" style="left:382.5px;top:241.1px;width:100px;text-align:center;font-size:17px;color:#222;font-weight:normal;">C</span>
<span class="t" style="left:496.5px;top:241.1px;width:100px;text-align:center;font-size:17px;color:#222;font-weight:normal;">D</span>
<span class="t" style="left:607.5px;top:241.1px;width:100px;text-align:center;font-size:17px;color:#217346;font-weight:normal;">E</span>
<span class="t" style="left:718.5px;top:241.1px;width:100px;text-align:center;font-size:17px;color:#222;font-weight:normal;">F</span>
<span class="t" style="left:829.5px;top:241.1px;width:100px;text-align:center;font-size:17px;color:#222;font-weight:normal;">G</span>
<span class="t" style="left:927.0px;top:241.1px;width:100px;text-align:center;font-size:17px;color:#222;font-weight:normal;">H</span>
<span class="t" style="left:1014.0px;top:241.1px;width:100px;text-align:center;font-size:17px;color:#222;font-weight:normal;">I</span>
<span class="t" style="left:1101.0px;top:241.1px;width:100px;text-align:center;font-size:17px;color:#222;font-weight:normal;">J</span>
<span class="t" style="left:1188.0px;top:241.1px;width:100px;text-align:center;font-size:17px;color:#222;font-weight:normal;">K</span>
<span class="t" style="left:1272.5px;top:241.1px;width:100px;text-align:center;font-size:17px;color:#222;font-weight:normal;">L</span>
<span class="t" style="left:1354.5px;top:241.1px;width:100px;text-align:center;font-size:17px;color:#222;font-weight:normal;">M</span>
<span class="t" style="left:1436.5px;top:241.1px;width:100px;text-align:center;font-size:17px;color:#222;font-weight:normal;">N</span>
<span class="t" style="left:1518.5px;top:241.1px;width:100px;text-align:center;font-size:17px;color:#222;font-weight:normal;">O</span>
<span class="t" style="left:1600.5px;top:241.1px;width:100px;text-align:center;font-size:17px;color:#222;font-weight:normal;">P</span>
<span class="t" style="left:1682.5px;top:241.1px;width:100px;text-align:center;font-size:17px;color:#222;font-weight:normal;">Q</span>
<span class="t" style="left:1764.5px;top:241.1px;width:100px;text-align:center;font-size:17px;color:#222;font-weight:normal;">R</span>
<span class="t" style="left:1854.0px;top:241.1px;width:40px;text-align:center;font-size:17px;color:#222;font-weight:normal;">S</span>
<span class="t" style="left:0.5px;top:266.0px;width:34px;text-align:center;font-size:16.5px;color:#222;font-weight:normal;">1</span>
<span class="t" style="left:0.5px;top:290.0px;width:34px;text-align:center;font-size:16.5px;color:#222;font-weight:normal;">2</span>
<span class="t" style="left:0.5px;top:314.0px;width:34px;text-align:center;font-size:16.5px;color:#222;font-weight:normal;">3</span>
<span class="t" style="left:0.5px;top:338.0px;width:34px;text-align:center;font-size:16.5px;color:#222;font-weight:normal;">4</span>
<span class="t" style="left:0.5px;top:362.0px;width:34px;text-align:center;font-size:16.5px;color:#222;font-weight:normal;">5</span>
<span class="t" style="left:0.5px;top:386.0px;width:34px;text-align:center;font-size:16.5px;color:#222;font-weight:normal;">6</span>
<span class="t" style="left:0.5px;top:410.0px;width:34px;text-align:center;font-size:16.5px;color:#222;font-weight:normal;">7</span>
<span class="t" style="left:0.5px;top:434.0px;width:34px;text-align:center;font-size:16.5px;color:#222;font-weight:normal;">8</span>
<span class="t" style="left:0.5px;top:458.0px;width:34px;text-align:center;font-size:16.5px;color:#222;font-weight:normal;">9</span>
<span class="t" style="left:0.5px;top:482.0px;width:34px;text-align:center;font-size:16.5px;color:#217346;font-weight:normal;">10</span>
<span class="t" style="left:0.5px;top:506.0px;width:34px;text-align:center;font-size:16.5px;color:#222;font-weight:normal;">11</span>
<span class="t" style="left:0.5px;top:530.0px;width:34px;text-align:center;font-size:16.5px;color:#222;font-weight:normal;">12</span>
<span class="t" style="left:0.5px;top:554.0px;width:34px;text-align:center;font-size:16.5px;color:#222;font-weight:normal;">13</span>
<span class="t" style="left:0.5px;top:578.0px;width:34px;text-align:center;font-size:16.5px;color:#222;font-weight:normal;">14</span>
<span class="t" style="left:0.5px;top:602.0px;width:34px;text-align:center;font-size:16.5px;color:#222;font-weight:normal;">15</span>
<span class="t" style="left:0.5px;top:626.0px;width:34px;text-align:center;font-size:16.5px;color:#222;font-weight:normal;">16</span>
<span class="t" style="left:0.5px;top:651.0px;width:34px;text-align:center;font-size:16.5px;color:#222;font-weight:normal;">17</span>
<span class="t" style="left:0.5px;top:675.0px;width:34px;text-align:center;font-size:16.5px;color:#222;font-weight:normal;">18</span>
<span class="t" style="left:0.5px;top:699.0px;width:34px;text-align:center;font-size:16.5px;color:#222;font-weight:normal;">19</span>
<span class="t" style="left:0.5px;top:723.0px;width:34px;text-align:center;font-size:16.5px;color:#222;font-weight:normal;">20</span>
<span class="t" style="left:0.5px;top:747.0px;width:34px;text-align:center;font-size:16.5px;color:#222;font-weight:normal;">21</span>
<span class="t" style="left:0.5px;top:771.0px;width:34px;text-align:center;font-size:16.5px;color:#222;font-weight:normal;">22</span>
<span class="t" style="left:0.5px;top:795.0px;width:34px;text-align:center;font-size:16.5px;color:#222;font-weight:normal;">23</span>
<span class="t" style="left:0.5px;top:819.0px;width:34px;text-align:center;font-size:16.5px;color:#222;font-weight:normal;">24</span>
<span class="t" style="left:0.5px;top:843.0px;width:34px;text-align:center;font-size:16.5px;color:#222;font-weight:normal;">25</span>
<span class="t" style="left:0.5px;top:867.0px;width:34px;text-align:center;font-size:16.5px;color:#222;font-weight:normal;">26</span>
<span class="t" style="left:0.5px;top:891.0px;width:34px;text-align:center;font-size:16.5px;color:#222;font-weight:normal;">27</span>
<span class="t" style="left:0.5px;top:915.0px;width:34px;text-align:center;font-size:16.5px;color:#222;font-weight:normal;">28</span>
<span class="t" style="left:0.5px;top:939.0px;width:34px;text-align:center;font-size:16.5px;color:#222;font-weight:normal;">29</span>
<span class="t" style="left:0.5px;top:963.0px;width:34px;text-align:center;font-size:16.5px;color:#222;font-weight:normal;">30</span>
<span class="t" style="left:0.5px;top:987.0px;width:34px;text-align:center;font-size:16.5px;color:#222;font-weight:normal;">31</span>
<span class="t" style="left:0.5px;top:1011.0px;width:34px;text-align:center;font-size:16.5px;color:#222;font-weight:normal;">32</span>
<span class="t" style="left:14.5px;top:266.1px;width:256px;text-align:center;font-size:16.4px;color:#fff;font-weight:normal;">Company Name</span>
<span class="t" style="left:355.5px;top:266.1px;width:154px;text-align:center;font-size:16.4px;color:#fff;font-weight:normal;">Company 1</span>
<span class="t" style="left:469.5px;top:266.1px;width:154px;text-align:center;font-size:16.4px;color:#fff;font-weight:normal;">Company 2</span>
<span class="t" style="left:583.5px;top:266.1px;width:148px;text-align:center;font-size:16.4px;color:#fff;font-weight:normal;">Company 3</span>
<span class="t" style="left:691.5px;top:266.1px;width:154px;text-align:center;font-size:16.4px;color:#fff;font-weight:normal;">Company 4</span>
<span class="t" style="left:805.5px;top:266.1px;width:148px;text-align:center;font-size:16.4px;color:#fff;font-weight:normal;">Company 5</span>
<span class="t" style="left:14.5px;top:314.1px;width:256px;text-align:center;font-size:16.4px;color:#000;font-weight:normal;">Quantity of Shares</span>
<span class="t" style="left:355.5px;top:315.4px;width:154px;text-align:center;font-size:16px;color:#000;font-weight:normal;">3671</span>
<span class="t" style="left:469.5px;top:315.4px;width:154px;text-align:center;font-size:16px;color:#000;font-weight:normal;">400</span>
<span class="t" style="left:583.5px;top:315.4px;width:148px;text-align:center;font-size:16px;color:#000;font-weight:normal;">421</span>
<span class="t" style="left:691.5px;top:315.4px;width:154px;text-align:center;font-size:16px;color:#000;font-weight:normal;">5300</span>
<span class="t" style="left:805.5px;top:315.4px;width:148px;text-align:center;font-size:16px;color:#000;font-weight:normal;">150</span>
<span class="t" style="left:14.5px;top:338.1px;width:256px;text-align:center;font-size:16.4px;color:#000;font-weight:normal;">Previous Dividend</span>
<span class="t" style="left:355.5px;top:339.4px;width:154px;text-align:center;font-size:16px;color:#000;font-weight:normal;">-843.78</span>
<span class="t" style="left:469.5px;top:339.4px;width:154px;text-align:center;font-size:16px;color:#000;font-weight:normal;">-6244</span>
<span class="t" style="left:583.5px;top:339.4px;width:148px;text-align:center;font-size:16px;color:#000;font-weight:normal;">-3648.83</span>
<span class="t" style="left:691.5px;top:339.4px;width:154px;text-align:center;font-size:16px;color:#000;font-weight:normal;">-2756</span>
<span class="t" style="left:805.5px;top:339.4px;width:148px;text-align:center;font-size:16px;color:#000;font-weight:normal;">-1180.5</span>
<span class="t" style="left:14.5px;top:362.1px;width:256px;text-align:center;font-size:16.4px;color:#000;font-weight:normal;">Previous Market Value</span>
<span class="t" style="left:355.5px;top:363.4px;width:154px;text-align:center;font-size:16px;color:#000;font-weight:normal;">8516.72</span>
<span class="t" style="left:469.5px;top:363.4px;width:154px;text-align:center;font-size:16px;color:#000;font-weight:normal;">15088</span>
<span class="t" style="left:583.5px;top:363.4px;width:148px;text-align:center;font-size:16px;color:#000;font-weight:normal;">10352.39</span>
<span class="t" style="left:691.5px;top:363.4px;width:154px;text-align:center;font-size:16px;color:#000;font-weight:normal;">27719</span>
<span class="t" style="left:805.5px;top:363.4px;width:148px;text-align:center;font-size:16px;color:#000;font-weight:normal;">23652</span>
<span class="t" style="left:14.5px;top:434.1px;width:256px;text-align:center;font-size:16.4px;color:#000;font-weight:normal;">Current Quote</span>
<span class="t" style="left:355.5px;top:435.4px;width:154px;text-align:center;font-size:16px;color:#000;font-weight:normal;">2.3</span>
<span class="t" style="left:469.5px;top:435.4px;width:154px;text-align:center;font-size:16px;color:#000;font-weight:normal;">37.52</span>
<span class="t" style="left:583.5px;top:435.4px;width:148px;text-align:center;font-size:16px;color:#000;font-weight:normal;">24.6</span>
<span class="t" style="left:691.5px;top:435.4px;width:154px;text-align:center;font-size:16px;color:#000;font-weight:normal;">5.1</span>
<span class="t" style="left:805.5px;top:435.4px;width:148px;text-align:center;font-size:16px;color:#000;font-weight:normal;">157.91</span>
<span class="t" style="left:14.5px;top:530.1px;width:256px;text-align:center;font-size:16.4px;color:#000;font-weight:normal;">Market Value</span>
<span class="t" style="left:355.5px;top:531.4px;width:154px;text-align:center;font-size:16px;color:#000;font-weight:normal;">8443.3</span>
<span class="t" style="left:469.5px;top:531.4px;width:154px;text-align:center;font-size:16px;color:#000;font-weight:normal;">15008</span>
<span class="t" style="left:583.5px;top:531.4px;width:148px;text-align:center;font-size:16px;color:#000;font-weight:normal;">10356.6</span>
<span class="t" style="left:691.5px;top:531.4px;width:154px;text-align:center;font-size:16px;color:#000;font-weight:normal;">27030</span>
<span class="t" style="left:805.5px;top:531.4px;width:148px;text-align:center;font-size:16px;color:#000;font-weight:normal;">23686.5</span>
<span class="t" style="left:14.5px;top:554.1px;width:256px;text-align:center;font-size:16.4px;color:#000;font-weight:normal;">Gain/Loss ($)</span>
<span class="t" style="left:355.5px;top:555.4px;width:154px;text-align:center;font-size:16px;color:#000;font-weight:normal;">-73.42</span>
<span class="t" style="left:469.5px;top:555.4px;width:154px;text-align:center;font-size:16px;color:#000;font-weight:normal;">-80</span>
<span class="t" style="left:583.5px;top:555.4px;width:148px;text-align:center;font-size:16px;color:#000;font-weight:normal;">4.21</span>
<span class="t" style="left:691.5px;top:555.4px;width:154px;text-align:center;font-size:16px;color:#000;font-weight:normal;">-689</span>
<span class="t" style="left:805.5px;top:555.4px;width:148px;text-align:center;font-size:16px;color:#000;font-weight:normal;">34.5</span>
<span class="t" style="left:14.5px;top:578.1px;width:256px;text-align:center;font-size:16.4px;color:#000;font-weight:normal;">Gain/Loss (%)</span>
<span class="t" style="left:355.5px;top:579.4px;width:154px;text-align:center;font-size:16px;color:#000;font-weight:normal;">-0.862068966</span>
<span class="t" style="left:469.5px;top:579.4px;width:154px;text-align:center;font-size:16px;color:#000;font-weight:normal;">-0.530222694</span>
<span class="t" style="left:583.5px;top:579.4px;width:148px;text-align:center;font-size:16px;color:#000;font-weight:normal;">0.040666938</span>
<span class="t" style="left:691.5px;top:579.4px;width:154px;text-align:center;font-size:16px;color:#000;font-weight:normal;">-2.485659656</span>
<span class="t" style="left:805.5px;top:579.4px;width:148px;text-align:center;font-size:16px;color:#000;font-weight:normal;">0.145865043</span>
<span class="t" style="left:14.5px;top:602.1px;width:256px;text-align:center;font-size:16.4px;color:#000;font-weight:normal;">Current Dividend/Income</span>
<span class="t" style="left:355.5px;top:603.4px;width:154px;text-align:center;font-size:16px;color:#000;font-weight:normal;">-917.2</span>
<span class="t" style="left:469.5px;top:603.4px;width:154px;text-align:center;font-size:16px;color:#000;font-weight:normal;">-6324</span>
<span class="t" style="left:583.5px;top:603.4px;width:148px;text-align:center;font-size:16px;color:#000;font-weight:normal;">-3644.62</span>
<span class="t" style="left:691.5px;top:603.4px;width:154px;text-align:center;font-size:16px;color:#000;font-weight:normal;">-3445</span>
<span class="t" style="left:805.5px;top:603.4px;width:148px;text-align:center;font-size:16px;color:#000;font-weight:normal;">-1146</span>
<span class="t" style="left:14.5px;top:651.1px;width:256px;text-align:center;font-size:16.4px;color:#000;font-weight:normal;">Total Dividend</span>
<span class="t" style="left:583.5px;top:652.4px;width:148px;text-align:center;font-size:16px;color:#000;font-weight:normal;">-15476.82</span>
<span class="t" style="left:14.5px;top:675.1px;width:256px;text-align:center;font-size:16.4px;color:#000;font-weight:normal;">Company 1</span>
<span class="t" style="left:230.5px;top:675.1px;width:165px;text-align:center;font-size:16.4px;color:#000;font-weight:normal;">Current Quote</span>
<span class="t" style="left:355.5px;top:676.4px;width:154px;text-align:center;font-size:16px;color:#000;font-weight:normal;">166.79</span>
<span class="t" style="left:469.5px;top:676.4px;width:154px;text-align:center;font-size:16px;color:#000;font-weight:normal;">167.29</span>
<span class="t" style="left:583.5px;top:676.4px;width:148px;text-align:center;font-size:16px;color:#000;font-weight:normal;">165.8</span>
<span class="t" style="left:691.5px;top:676.4px;width:154px;text-align:center;font-size:16px;color:#000;font-weight:normal;">165.43</span>
<span class="t" style="left:805.5px;top:676.4px;width:148px;text-align:center;font-size:16px;color:#000;font-weight:normal;">161.71</span>
<span class="t" style="left:913.5px;top:676.4px;width:127px;text-align:center;font-size:16px;color:#000;font-weight:normal;">164.06</span>
<span class="t" style="left:1000.5px;top:676.4px;width:127px;text-align:center;font-size:16px;color:#000;font-weight:normal;">158.99</span>
<span class="t" style="left:1087.5px;top:676.4px;width:127px;text-align:center;font-size:16px;color:#000;font-weight:normal;">159.8</span>
<span class="t" style="left:1174.5px;top:676.4px;width:127px;text-align:center;font-size:16px;color:#000;font-weight:normal;">158.33</span>
<span class="t" style="left:1261.5px;top:676.4px;width:122px;text-align:center;font-size:16px;color:#000;font-weight:normal;">156.25</span>
<span class="t" style="left:1343.5px;top:676.4px;width:122px;text-align:center;font-size:16px;color:#000;font-weight:normal;">157.68</span>
<span class="t" style="left:1425.5px;top:676.4px;width:122px;text-align:center;font-size:16px;color:#000;font-weight:normal;">157.91</span>
<span class="t" style="left:14.5px;top:723.1px;width:256px;text-align:center;font-size:16.4px;color:#000;font-weight:normal;">Company 2</span>
<span class="t" style="left:230.5px;top:723.1px;width:165px;text-align:center;font-size:16.4px;color:#000;font-weight:normal;">Current Quote</span>
<span class="t" style="left:355.5px;top:724.4px;width:154px;text-align:center;font-size:16px;color:#000;font-weight:normal;">5.75</span>
<span class="t" style="left:469.5px;top:724.4px;width:154px;text-align:center;font-size:16px;color:#000;font-weight:normal;">5.63</span>
<span class="t" style="left:583.5px;top:724.4px;width:148px;text-align:center;font-size:16px;color:#000;font-weight:normal;">5.53</span>
<span class="t" style="left:691.5px;top:724.4px;width:154px;text-align:center;font-size:16px;color:#000;font-weight:normal;">5.81</span>
<span class="t" style="left:805.5px;top:724.4px;width:148px;text-align:center;font-size:16px;color:#000;font-weight:normal;">5.85</span>
<span class="t" style="left:913.5px;top:724.4px;width:127px;text-align:center;font-size:16px;color:#000;font-weight:normal;">5.68</span>
<span class="t" style="left:1000.5px;top:724.4px;width:127px;text-align:center;font-size:16px;color:#000;font-weight:normal;">5.6</span>
<span class="t" style="left:1087.5px;top:724.4px;width:127px;text-align:center;font-size:16px;color:#000;font-weight:normal;">5.5</span>
<span class="t" style="left:1174.5px;top:724.4px;width:127px;text-align:center;font-size:16px;color:#000;font-weight:normal;">5.47</span>
<span class="t" style="left:1261.5px;top:724.4px;width:122px;text-align:center;font-size:16px;color:#000;font-weight:normal;">5.3</span>
<span class="t" style="left:1343.5px;top:724.4px;width:122px;text-align:center;font-size:16px;color:#000;font-weight:normal;">5.23</span>
<span class="t" style="left:1425.5px;top:724.4px;width:122px;text-align:center;font-size:16px;color:#000;font-weight:normal;">5.1</span>
<span class="t" style="left:14.5px;top:771.1px;width:256px;text-align:center;font-size:16.4px;color:#000;font-weight:normal;">Company 3</span>
<span class="t" style="left:230.5px;top:771.1px;width:165px;text-align:center;font-size:16.4px;color:#000;font-weight:normal;">Current Quote</span>
<span class="t" style="left:355.5px;top:772.4px;width:154px;text-align:center;font-size:16px;color:#000;font-weight:normal;">30.2</span>
<span class="t" style="left:469.5px;top:772.4px;width:154px;text-align:center;font-size:16px;color:#000;font-weight:normal;">28.28</span>
<span class="t" style="left:583.5px;top:772.4px;width:148px;text-align:center;font-size:16px;color:#000;font-weight:normal;">28.38</span>
<span class="t" style="left:691.5px;top:772.4px;width:154px;text-align:center;font-size:16px;color:#000;font-weight:normal;">27.68</span>
<span class="t" style="left:805.5px;top:772.4px;width:148px;text-align:center;font-size:16px;color:#000;font-weight:normal;">26.63</span>
<span class="t" style="left:913.5px;top:772.4px;width:127px;text-align:center;font-size:16px;color:#000;font-weight:normal;">27.54</span>
<span class="t" style="left:1000.5px;top:772.4px;width:127px;text-align:center;font-size:16px;color:#000;font-weight:normal;">26.09</span>
<span class="t" style="left:1087.5px;top:772.4px;width:127px;text-align:center;font-size:16px;color:#000;font-weight:normal;">26.09</span>
<span class="t" style="left:1174.5px;top:772.4px;width:127px;text-align:center;font-size:16px;color:#000;font-weight:normal;">25.2</span>
<span class="t" style="left:1261.5px;top:772.4px;width:122px;text-align:center;font-size:16px;color:#000;font-weight:normal;">25.22</span>
<span class="t" style="left:1343.5px;top:772.4px;width:122px;text-align:center;font-size:16px;color:#000;font-weight:normal;">24.59</span>
<span class="t" style="left:1425.5px;top:772.4px;width:122px;text-align:center;font-size:16px;color:#000;font-weight:normal;">24.6</span>
<span class="t" style="left:14.5px;top:819.1px;width:256px;text-align:center;font-size:16.4px;color:#000;font-weight:normal;">Company 4</span>
<span class="t" style="left:230.5px;top:819.1px;width:165px;text-align:center;font-size:16.4px;color:#000;font-weight:normal;">Current Quote</span>
<span class="t" style="left:355.5px;top:820.4px;width:154px;text-align:center;font-size:16px;color:#000;font-weight:normal;">52.2</span>
<span class="t" style="left:469.5px;top:820.4px;width:154px;text-align:center;font-size:16px;color:#000;font-weight:normal;">51.84</span>
<span class="t" style="left:583.5px;top:820.4px;width:148px;text-align:center;font-size:16px;color:#000;font-weight:normal;">51.15</span>
<span class="t" style="left:691.5px;top:820.4px;width:154px;text-align:center;font-size:16px;color:#000;font-weight:normal;">52.09</span>
<span class="t" style="left:805.5px;top:820.4px;width:148px;text-align:center;font-size:16px;color:#000;font-weight:normal;">50.51</span>
<span class="t" style="left:913.5px;top:820.4px;width:127px;text-align:center;font-size:16px;color:#000;font-weight:normal;">51.32</span>
<span class="t" style="left:1000.5px;top:820.4px;width:127px;text-align:center;font-size:16px;color:#000;font-weight:normal;">50.82</span>
<span class="t" style="left:1087.5px;top:820.4px;width:127px;text-align:center;font-size:16px;color:#000;font-weight:normal;">51.15</span>
<span class="t" style="left:1174.5px;top:820.4px;width:127px;text-align:center;font-size:16px;color:#000;font-weight:normal;">41.58</span>
<span class="t" style="left:1261.5px;top:820.4px;width:122px;text-align:center;font-size:16px;color:#000;font-weight:normal;">38.9</span>
<span class="t" style="left:1343.5px;top:820.4px;width:122px;text-align:center;font-size:16px;color:#000;font-weight:normal;">37.72</span>
<span class="t" style="left:1425.5px;top:820.4px;width:122px;text-align:center;font-size:16px;color:#000;font-weight:normal;">37.52</span>
<span class="t" style="left:14.5px;top:867.1px;width:256px;text-align:center;font-size:16.4px;color:#000;font-weight:normal;">Company 5</span>
<span class="t" style="left:230.5px;top:867.1px;width:165px;text-align:center;font-size:16.4px;color:#000;font-weight:normal;">Current Quote</span>
<span class="t" style="left:355.5px;top:868.4px;width:154px;text-align:center;font-size:16px;color:#000;font-weight:normal;">3.2</span>
<span class="t" style="left:469.5px;top:868.4px;width:154px;text-align:center;font-size:16px;color:#000;font-weight:normal;">3.09</span>
<span class="t" style="left:583.5px;top:868.4px;width:148px;text-align:center;font-size:16px;color:#000;font-weight:normal;">2.9</span>
<span class="t" style="left:691.5px;top:868.4px;width:154px;text-align:center;font-size:16px;color:#000;font-weight:normal;">2.32</span>
<span class="t" style="left:805.5px;top:868.4px;width:148px;text-align:center;font-size:16px;color:#000;font-weight:normal;">2.35</span>
<span class="t" style="left:913.5px;top:868.4px;width:127px;text-align:center;font-size:16px;color:#000;font-weight:normal;">2.37</span>
<span class="t" style="left:1000.5px;top:868.4px;width:127px;text-align:center;font-size:16px;color:#000;font-weight:normal;">2.22</span>
<span class="t" style="left:1087.5px;top:868.4px;width:127px;text-align:center;font-size:16px;color:#000;font-weight:normal;">2.3</span>
<span class="t" style="left:1174.5px;top:868.4px;width:127px;text-align:center;font-size:16px;color:#000;font-weight:normal;">2.4</span>
<span class="t" style="left:1261.5px;top:868.4px;width:122px;text-align:center;font-size:16px;color:#000;font-weight:normal;">2.33</span>
<span class="t" style="left:1343.5px;top:868.4px;width:122px;text-align:center;font-size:16px;color:#000;font-weight:normal;">2.32</span>
<span class="t" style="left:1425.5px;top:868.4px;width:122px;text-align:center;font-size:16px;color:#000;font-weight:normal;">2.3</span>
<span class="t" style="left:230.5px;top:915.1px;width:165px;text-align:center;font-size:16.4px;color:#000;font-weight:normal;">Date</span>
<span class="t" style="left:355.5px;top:914.9px;width:154px;text-align:center;font-size:16.6px;color:#000;font-weight:normal;">4/10/2015</span>
<span class="t" style="left:469.5px;top:914.9px;width:154px;text-align:center;font-size:16.6px;color:#000;font-weight:normal;">4/13/2015</span>
<span class="t" style="left:583.5px;top:914.9px;width:148px;text-align:center;font-size:16.6px;color:#000;font-weight:normal;">4/15/2015</span>
<span class="t" style="left:691.5px;top:914.9px;width:154px;text-align:center;font-size:16.6px;color:#000;font-weight:normal;">4/17/2015</span>
<span class="t" style="left:805.5px;top:914.9px;width:148px;text-align:center;font-size:16.6px;color:#000;font-weight:normal;">4/20/2015</span>
<span class="t" style="left:913.5px;top:914.9px;width:127px;text-align:center;font-size:16.6px;color:#000;font-weight:normal;">4/22/2015</span>
<span class="t" style="left:1000.5px;top:914.9px;width:127px;text-align:center;font-size:16.6px;color:#000;font-weight:normal;">4/24/2015</span>
<span class="t" style="left:1087.5px;top:914.9px;width:127px;text-align:center;font-size:16.6px;color:#000;font-weight:normal;">4/27/2015</span>
<span class="t" style="left:1174.5px;top:914.9px;width:127px;text-align:center;font-size:16.6px;color:#000;font-weight:normal;">4/29/2015</span>
<span class="t" style="left:1261.5px;top:914.9px;width:122px;text-align:center;font-size:16.6px;color:#000;font-weight:normal;">5/1/2015</span>
<span class="t" style="left:1343.5px;top:914.9px;width:122px;text-align:center;font-size:16.6px;color:#000;font-weight:normal;">5/4/2015</span>
<span class="t" style="left:1425.5px;top:914.9px;width:122px;text-align:center;font-size:16.6px;color:#000;font-weight:normal;">5/6/2015</span>
<div class="a" style="left:33px;top:476px;width:2px;height:25px;background:#217346;"></div>
<div class="a" style="left:602px;top:475px;width:111px;height:27px;border:2px solid #217346"></div>
<div class="a" style="left:707px;top:496px;width:9px;height:8px;background:#fff;"></div>
<div class="a" style="left:709px;top:498px;width:5px;height:5px;background:#217346;"></div>
<div class="a" style="left:1894px;top:235px;width:26px;height:788px;background:#e6e6e6;"></div>
<div class="a" style="left:1894px;top:235px;width:1px;height:788px;background:#ababab;"></div>
<div class="a" style="left:1898px;top:261px;width:19px;height:45px;background:#fff;"></div>
<div class="a" style="left:1898px;top:261px;width:19px;height:719px;background:#fff;border:1px solid #c6c6c6;border-bottom:none"></div>
<div class="a" style="left:1898px;top:979px;width:20px;height:1px;background:#d6d6d6;"></div>
<div class="a" style="left:1899px;top:980px;width:18px;height:25px;background:#e0e0e0;"></div>
<div class="a" style="left:1898px;top:1005px;width:20px;height:1px;background:#c6c6c6;"></div>
<div class="a" style="left:1899px;top:1006px;width:18px;height:16px;background:#fff;"></div>
<svg style="left:1904px;top:1012px" width="9" height="5" viewBox="0 0 9 5"><path d="M0 0 H8 L4 4.5 Z" fill="#666"/></svg>
<div class="a" style="left:0px;top:1023px;width:1920px;height:30px;background:#e6e6e6;"></div>
<div class="a" style="left:0px;top:1023px;width:1920px;height:1px;background:#ababab;"></div>
<svg style="left:27px;top:1033px" width="6" height="10" viewBox="0 0 6 10"><path d="M5 0 V9 L0 4.5 Z" fill="#c6c6c6"/></svg>
<svg style="left:56px;top:1033px" width="6" height="10" viewBox="0 0 6 10"><path d="M0 0 V9 L5 4.5 Z" fill="#c6c6c6"/></svg>
<div class="a" style="left:103px;top:1023px;width:80px;height:26px;background:#fff;"></div>
<div class="a" style="left:103px;top:1023px;width:1px;height:26px;background:#ababab;"></div>
<div class="a" style="left:182px;top:1023px;width:1px;height:26px;background:#ababab;"></div>
<div class="a" style="left:103px;top:1047px;width:80px;height:2px;background:#217346;"></div>
<span class="t" style="left:114.0px;top:1026.6px;font-size:16.3px;color:#217346;font-weight:bold;">Sheet1</span>
<span class="t" style="left:194.0px;top:1026.6px;font-size:16.3px;color:#444;font-weight:normal;">Sheet2</span>
<div class="a" style="left:261px;top:1027px;width:1px;height:21px;background:#bdbdbd;"></div>
<span class="t" style="left:273.0px;top:1026.6px;font-size:16.3px;color:#444;font-weight:normal;">Sheet3</span>
<div class="a" style="left:339px;top:1027px;width:1px;height:21px;background:#bdbdbd;"></div>
<svg style="left:373px;top:1028px" width="20" height="20" viewBox="0 0 20 20"><circle cx="10" cy="10" r="8.5" fill="none" stroke="#777" stroke-width="1.4"/><path d="M10 5 V15 M5 10 H15" stroke="#777" stroke-width="1.8"/></svg>
<div class="a" style="left:1149px;top:1031px;width:3px;height:3px;background:#a6a6a6;"></div>
<div class="a" style="left:1149px;top:1036px;width:3px;height:3px;background:#a6a6a6;"></div>
<div class="a" style="left:1149px;top:1041px;width:3px;height:3px;background:#a6a6a6;"></div>
<div class="a" style="left:1166px;top:1028px;width:19px;height:19px;background:#fff;border:1px solid #c6c6c6"></div>
<svg style="left:1173px;top:1033px" width="6" height="10" viewBox="0 0 6 10"><path d="M5 0 V9 L0 4.5 Z" fill="#666"/></svg>
<div class="a" style="left:1186px;top:1028px;width:651px;height:19px;background:#fff;border:1px solid #c6c6c6"></div>
<div class="a" style="left:1876px;top:1028px;width:19px;height:19px;background:#fff;border:1px solid #c6c6c6"></div>
<svg style="left:1883px;top:1033px" width="6" height="10" viewBox="0 0 6 10"><path d="M0 0 V9 L5 4.5 Z" fill="#666"/></svg>
<div class="a" style="left:0px;top:1053px;width:1920px;height:25px;background:#f0f0f0;"></div>
<div class="a" style="left:0px;top:1052px;width:1920px;height:1px;background:#d0d0d0;"></div>
<span class="t" style="left:6.5px;top:1059.3px;font-size:13.2px;color:#555;font-weight:normal;">Ready</span>
<svg style="left:64px;top:1057px" width="16" height="16" viewBox="0 0 16 16"><circle cx="3.5" cy="3.5" r="3.2" fill="#666"/><rect x="1.5" y="3.5" width="13" height="11" fill="#fff" stroke="#777"/><rect x="1.5" y="3.5" width="13" height="3" fill="#777"/><path d="M4 9 H13 M4 12 H13 M5.5 7 V14 M8.5 7 V14 M11.5 7 V14" stroke="#999"/></svg>
<div class="a" style="left:1582px;top:1053px;width:40px;height:25px;background:#c9c9c9;"></div>
<svg style="left:1594px;top:1058px" width="15" height="14" viewBox="0 0 15 14"><rect x="0.5" y="0.5" width="13" height="12" fill="none" stroke="#666"/><path d="M0.5 4.5 H13.5 M0.5 8.5 H13.5 M4.8 0.5 V12.5 M9.2 0.5 V12.5" stroke="#666"/></svg>
<svg style="left:1635px;top:1058px" width="15" height="14" viewBox="0 0 15 14"><rect x="0.5" y="0.5" width="13" height="12" fill="none" stroke="#666"/><rect x="3" y="3" width="8" height="7" fill="none" stroke="#666"/><path d="M4.5 5 H9.5 M4.5 7.5 H9.5" stroke="#666"/></svg>
<svg style="left:1676px;top:1058px" width="15" height="14" viewBox="0 0 15 14"><path d="M0.5 0.5 H13.5 V12.5 H0.5 Z M5 0.5 V6 H9 V0.5" fill="none" stroke="#666"/></svg>
<div class="a" style="left:1709px;top:1064px;width:9px;height:2px;background:#666;"></div>
<div class="a" style="left:1724px;top:1064px;width:125px;height:1px;background:#c6c6c6;"></div>
<div class="a" style="left:1783px;top:1058px;width:5px;height:15px;background:#666;"></div>
<svg style="left:1852px;top:1058px" width="13" height="13" viewBox="0 0 13 13"><path d="M6.5 1 V12 M1 6.5 H12" stroke="#666" stroke-width="2"/></svg>
<span class="t" style="left:1879.5px;top:1059.5px;font-size:13px;color:#555;font-weight:normal;">100%</span>
<div class="a" style="left:0px;top:1078px;width:1920px;height:2px;background:#5f6670;"></div>
<div class="a" style="left:1694px;top:159px;width:222px;height:338px;background:#fff;border:1px solid #c6c6c6;box-shadow:1px 2px 3px rgba(0,0,0,0.12)"></div>
<div class="a" style="left:1696px;top:251px;width:217px;height:30px;background:#c6c6c6;"></div>
<span class="t" style="left:1731.5px;top:168.8px;font-size:15px;color:#444;font-weight:normal;"><u style="text-underline-offset:2px">F</u>ind...</span>
<span class="t" style="left:1731.5px;top:198.8px;font-size:15px;color:#444;font-weight:normal;"><u style="text-underline-offset:2px">R</u>eplace...</span>
<span class="t" style="left:1731.5px;top:228.8px;font-size:15px;color:#444;font-weight:normal;"><u style="text-underline-offset:2px">G</u>o To...</span>
<span class="t" style="left:1731.5px;top:258.8px;font-size:15px;color:#444;font-weight:normal;">Go To <u style="text-underline-offset:2px">S</u>pecial...</span>
<span class="t" style="left:1731.5px;top:290.8px;font-size:15px;color:#444;font-weight:normal;">Form<u style="text-underline-offset:2px">u</u>las</span>
<span class="t" style="left:1731.5px;top:320.8px;font-size:15px;color:#444;font-weight:normal;">Co<u style="text-underline-offset:2px">m</u>ments</span>
<span class="t" style="left:1731.5px;top:350.8px;font-size:15px;color:#444;font-weight:normal;"><u style="text-underline-offset:2px">C</u>onditional Formatting</span>
<span class="t" style="left:1731.5px;top:380.8px;font-size:15px;color:#444;font-weight:normal;">Co<u style="text-underline-offset:2px">n</u>stants</span>
<span class="t" style="left:1731.5px;top:410.8px;font-size:15px;color:#444;font-weight:normal;">Data <u style="text-underline-offset:2px">V</u>alidation</span>
<span class="t" style="left:1731.5px;top:442.8px;font-size:15px;color:#444;font-weight:normal;">Select <u style="text-underline-offset:2px">O</u>bjects</span>
<span class="t" style="left:1731.5px;top:472.8px;font-size:15px;color:#444;font-weight:normal;">Selection <u style="text-underline-offset:2px">P</u>ane...</span>
<div class="a" style="left:1732px;top:434px;width:181px;height:1px;background:#e1e1e1;"></div>
<svg style="left:1702px;top:166px" width="17" height="17" viewBox="0 0 17 17"><circle cx="10" cy="6.5" r="5.3" fill="none" stroke="#3c7fc2" stroke-width="2"/><path d="M6 10.5 L1.5 15" stroke="#3c7fc2" stroke-width="2.5" stroke-linecap="round"/></svg>
<svg style="left:1700px;top:197px" width="20" height="18" viewBox="0 0 20 18"><text x="1" y="8" font-size="9.5" fill="#555" font-family="Liberation Sans">ab</text><text x="7" y="17" font-size="9.5" fill="#555" font-family="Liberation Sans">ac</text><path d="M1.5 9 V12.5 H6 M4 10.5 L6 12.5 L4 14.5" fill="none" stroke="#3c7fc2" stroke-width="1.2"/></svg>
<svg style="left:1702px;top:230px" width="16" height="10" viewBox="0 0 16 10"><path d="M1 5 H14 M9.5 0.5 L14 5 L9.5 9.5" fill="none" stroke="#3c7fc2" stroke-width="2.2"/></svg>
<svg style="left:1705px;top:441px" width="12" height="18" viewBox="0 0 12 18"><path d="M0.5 0.5 V15 L4 11.5 L7 17 L9 16 L6.3 10.5 H11 Z" fill="#fff" stroke="#666"/></svg>
<svg style="left:1702px;top:471px" width="18" height="19" viewBox="0 0 18 19"><rect x="0.5" y="0.5" width="7" height="7" fill="none" stroke="#666"/><rect x="5" y="3" width="6" height="5" fill="#e8b96a"/><rect x="0.5" y="10.5" width="7" height="7" fill="none" stroke="#666"/><path d="M10.5 8.5 V17 L12.5 15 L14 18 L15.5 17.3 L14 14.5 H16.5 Z" fill="#fff" stroke="#666" stroke-width="0.9"/></svg>
<div class="a" style="left:1788px;top:58px;width:82px;height:115px;border:8.5px solid #b1e11f"></div>
<div class="a" style="left:1679px;top:237px;width:241px;height:57px;border:8px solid #b1e11f"></div>
<svg style="left:1779px;top:260px" width="14" height="22" viewBox="0 0 14 22"><path d="M1 1 V17 L5 13.2 L8 20 L10.5 19 L7.6 12.3 H13 Z" fill="#fff" stroke="#000" stroke-width="1.1" stroke-linejoin="round"/></svg>
</body></html>
